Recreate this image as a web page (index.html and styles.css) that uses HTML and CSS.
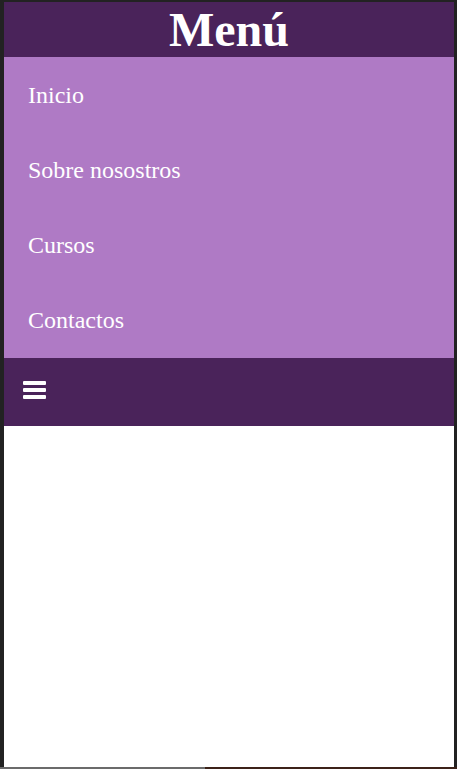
FILE: index.html
```html
<!DOCTYPE html>
<html>
  <head>
    <meta charset="utf-8">
    <title>Menú</title>
    <link rel="stylesheet" href="styles.css">
  </head>
  <body>
    <div class="window">
      <div class="page">
        <header class="header">
          <h1>Menú</h1>
        </header>
        <nav class="menu">
          <a href="#">Inicio</a>
          <a href="#">Sobre nosostros</a>
          <a href="#">Cursos</a>
          <a href="#">Contactos</a>
        </nav>
        <div class="toggle">
          <span class="bars">
            <i></i>
            <i></i>
            <i></i>
          </span>
        </div>
      </div>
    </div>
    <div class="taskbar">
      <div class="task-left"></div>
      <div class="task-right"></div>
    </div>
  </body>
</html>
```

FILE: styles.css
```css
html,
body {
  height: 100%;
}
body {
  margin: 0;
  background: #222222;
  font-family: "Liberation Serif", "Times New Roman", serif;
  display: flex;
  flex-direction: column;
}
.window {
  flex: 1;
  padding: 2px 3px 0 4px;
  display: flex;
}
.page {
  flex: 1;
  background: #ffffff;
}
.header {
  background: #4a235a;
  text-align: center;
}
.header h1 {
  margin: 0;
  font-size: 48px;
  color: #ffffff;
}
.menu {
  display: flex;
  flex-direction: column;
  background: #af7ac5;
}
.menu a {
  display: block;
  padding: 24.5px 24px 23.75px;
  font-size: 24px;
  color: #ffffff;
  text-decoration: none;
}
.toggle {
  background: #4a235a;
  height: 68px;
  padding-left: 19px;
  display: flex;
  align-items: center;
}
.bars {
  display: flex;
  flex-direction: column;
  gap: 3px;
  width: 23px;
  margin-bottom: 4px;
}
.bars i {
  display: block;
  height: 4px;
  background: #ffffff;
  border-radius: 1px;
}
.taskbar {
  display: flex;
  height: 2px;
}
.task-left {
  width: 205px;
  background: #6b6b6b;
}
.task-right {
  flex: 1;
  background: #3c2219;
}
```
